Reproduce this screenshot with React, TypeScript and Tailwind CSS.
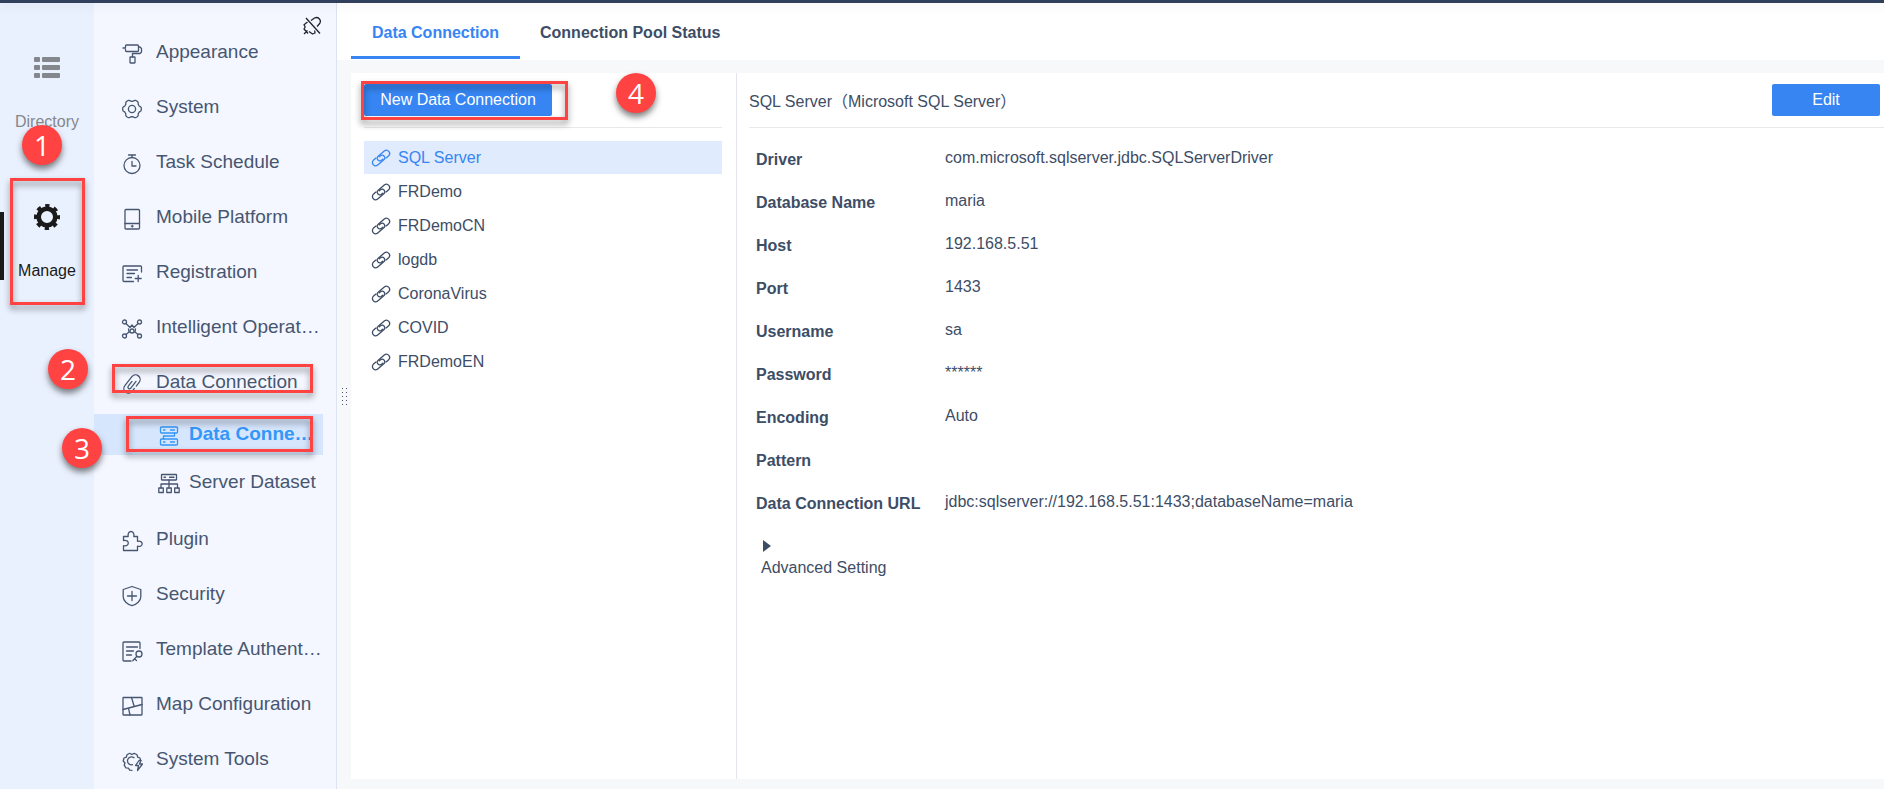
import type { ReactNode } from "react";

type NavItem = { label: string; icon: ReactNode };

// Wavy outline used by the gear shaped icons
function gearPath(cx: number, cy: number, r: number, depth: number, lobes: number) {
  const pts: string[] = [];
  for (let i = 0; i <= 96; i++) {
    const a = (i / 96) * Math.PI * 2;
    const wave = Math.max(-0.8, Math.min(0.5, Math.cos(a * lobes)));
    const d = r + depth * wave;
    pts.push(`${(cx + d * Math.cos(a)).toFixed(2)} ${(cy + d * Math.sin(a)).toFixed(2)}`);
  }
  return `M${pts.join("L")}Z`;
}

function Glyph({ children, className = "size-[22px]" }: { children: ReactNode; className?: string }) {
  return (
    <svg
      viewBox="0 0 22 22"
      fill="none"
      stroke="currentColor"
      strokeWidth={1.3}
      strokeLinecap="round"
      strokeLinejoin="round"
      aria-hidden="true"
      className={`shrink-0 ${className}`}
    >
      {children}
    </svg>
  );
}

const topItems: NavItem[] = [
  {
    label: "Appearance",
    icon: (
      <Glyph>
        <path d="M4.500 4.500V3a1 1 0 0 1 1-1h11a1 1 0 0 1 1 1v4.500a1 1 0 0 1-1 1h-11a1 1 0 0 1-1-1V6.500" />
        <path d="M2 5h2.500M17.500 4h1.500l1.500 1.500v3.500l-1.500 1.500h-7.500V14" />
        <rect x="9" y="14" width="5" height="6" rx="0.500" />
      </Glyph>
    ),
  },
  {
    label: "System",
    icon: (
      <Glyph>
        <path d={gearPath(11, 11, 8.7, 1.2, 6)} />
        <circle cx="11" cy="11" r="3.600" />
      </Glyph>
    ),
  },
  {
    label: "Task Schedule",
    icon: (
      <Glyph>
        <circle cx="11" cy="12.500" r="8" />
        <path d="M7.500 2h7M11 2v2.500M11 8.500v4.500h4" />
      </Glyph>
    ),
  },
  {
    label: "Mobile Platform",
    icon: (
      <Glyph>
        <rect x="4" y="1.500" width="14.500" height="19.500" rx="1" />
        <path d="M4 15.500h14.500M10.400 18.200h1.700M11.250 17.400v1.700" />
      </Glyph>
    ),
  },
  {
    label: "Registration",
    icon: (
      <Glyph>
        <path d="M20.500 9V4a1 1 0 0 0-1-1H3a1 1 0 0 0-1 1v13.500a1 1 0 0 0 1 1h9.500" />
        <path d="M6 7h10.500M6 10.500h7.500M6 14.500h4.500M17.200 12.500v6M14.200 15.500h6" />
      </Glyph>
    ),
  },
  {
    label: "Intelligent Operation",
    icon: (
      <Glyph>
        <circle cx="3.500" cy="4" r="2" />
        <circle cx="18.500" cy="4" r="2" />
        <circle cx="3.500" cy="18" r="2" />
        <circle cx="18.500" cy="18" r="2" />
        <circle cx="11" cy="13" r="2" />
        <path d="M5 5.500l4 4 2-2.500 2 2.500 4-4M5 16.500l3-2.500-.500-3M17 16.500l-3-2.500.500-3M9.500 14.500l-1.500-.500M12.500 14.500l1.500-.500" />
      </Glyph>
    ),
  },
  {
    label: "Data Connection",
    icon: (
      <Glyph>
        <g transform="rotate(38 11 11)">
          <path d="M15.600 10V5.300a4.600 4.600 0 0 0-9.200 0v11.400a4.600 4.600 0 0 0 9.200 0V13" />
          <path d="M12.600 6.500v8.500a1.600 1.600 0 0 1-3.200 0V9" />
        </g>
      </Glyph>
    ),
  },
];

const childItems = [
  {
    label: "Data Connection",
    active: true,
    icon: (
      <Glyph className="size-[22px]">
        <rect x="2.500" y="2" width="17" height="6" rx="1" />
        <rect x="2.500" y="14" width="17" height="6" rx="1" />
        <path d="M5.500 5h1.500M12.500 5h4M5.500 17h1.500M12.500 17h4M16.500 8v3H5.500v3" />
      </Glyph>
    ),
  },
  {
    label: "Server Dataset",
    active: false,
    icon: (
      <Glyph className="size-[22px]">
        <rect x="3.500" y="1.500" width="15" height="5.500" rx="0.500" />
        <path d="M6 4.250h1.500M11.500 4.250h4.500M11 7v8M3 15v-4h16.500v4" />
        <rect x="0.800" y="15" width="4.500" height="4.500" />
        <rect x="8.800" y="15" width="4.500" height="4.500" />
        <rect x="16.700" y="15" width="4.500" height="4.500" />
      </Glyph>
    ),
  },
];

const bottomItems: NavItem[] = [
  {
    label: "Plugin",
    icon: (
      <Glyph>
        <path d="M2.500 20.500v-4.800c3.500.8 4.800-1 4.800-2.700s-1.700-3.200-4.800-2.500V6.500h4.700c-.6-3 .8-5 2.800-5s3.400 2 2.800 5h3.700v4.800c2.700-.6 4.700.7 4.700 2.500s-2 3.200-4.700 2.400v4.300z" />
      </Glyph>
    ),
  },
  {
    label: "Security",
    icon: (
      <Glyph>
        <path d="M11 1.500l8.800 3v7.200c0 4-4 7.600-8.800 9-4.800-1.400-8.800-5-8.800-9V4.500zM11 6.500v9M6.500 11h9" />
      </Glyph>
    ),
  },
  {
    label: "Template Authentication",
    icon: (
      <Glyph>
        <path d="M19 8.500V3a1 1 0 0 0-1-1H3a1 1 0 0 0-1 1v17a1 1 0 0 0 1 1h7" />
        <path d="M5.500 7h11M5.500 11h7M5.500 15h5M15.700 16.500l-4 4.300M13.500 18.700l2 1.800" />
        <circle cx="18" cy="14" r="3" />
      </Glyph>
    ),
  },
  {
    label: "Map Configuration",
    icon: (
      <Glyph>
        <rect x="2" y="2.500" width="19" height="17.500" rx="0.500" />
        <path d="M2 14.500l19-5M10.500 2.500l2.800 9.200M7.500 13.200l1.500 6.800" />
      </Glyph>
    ),
  },
  {
    label: "System Tools",
    icon: (
      <Glyph>
        <path d="M11 20.300l-2.300-.2-1.300-2-2.500-.2-1.700-2.700.8-2.200-1.800-2 .8-3 2.300-.8.7-2.400 2.700-1.500 2.100 1.200 2.400-1.200 2.800 1.500.7 2.400 2.200.8.900 2.600" />
        <path d="M13 7.700a4 4 0 1 0-1.500 7" />
        <path d="M18 10.500l-3.500 5h3l-1 5 5-6.500h-3l1.500-3.500z" />
      </Glyph>
    ),
  },
];

const connections = ["SQL Server", "FRDemo", "FRDemoCN", "logdb", "CoronaVirus", "COVID", "FRDemoEN"];

const details = [
  ["Driver", "com.microsoft.sqlserver.jdbc.SQLServerDriver"],
  ["Database Name", "maria"],
  ["Host", "192.168.5.51"],
  ["Port", "1433"],
  ["Username", "sa"],
  ["Password", "******"],
  ["Encoding", "Auto"],
  ["Pattern", ""],
  ["Data Connection URL", "jdbc:sqlserver://192.168.5.51:1433;databaseName=maria"],
];

function LinkIcon() {
  return (
    <svg
      viewBox="0 0 20 20"
      fill="none"
      stroke="currentColor"
      strokeWidth={1.3}
      strokeLinecap="round"
      aria-hidden="true"
      className="size-5 shrink-0"
    >
      <g transform="rotate(-40 10 10)">
        <path d="M14 13.200h3a3.200 3.200 0 0 0 0-6.400H9a2.600 2.600 0 0 0 0 5.200h1.500" />
        <path d="M6 6.800H3a3.200 3.200 0 0 0 0 6.400h8a2.600 2.600 0 0 0 0-5.200H9.500" />
      </g>
    </svg>
  );
}

function NavRow({ label, icon }: NavItem) {
  return (
    <a href="#" className="flex h-[55px] items-center gap-[13px] pl-[27px] text-[19px]">
      <span className="pt-[2px]">{icon}</span>
      <span className="truncate">{label}</span>
    </a>
  );
}

function Rail() {
  return (
    <nav className="flex w-[94px] shrink-0 flex-col bg-[#eaf1fe] pt-[17px] text-base">
      <a href="#" className="flex h-[149px] flex-col items-center justify-center gap-[29px] text-[#84878c]">
        <svg viewBox="0 0 26 26" fill="currentColor" aria-hidden="true" className="size-[26px]">
          <rect x="0" y="2" width="6" height="5" rx="1" />
          <rect x="8" y="2" width="18" height="5" rx="1" />
          <rect x="0" y="10" width="6" height="5" rx="1" />
          <rect x="8" y="10" width="18" height="5" rx="1" />
          <rect x="0" y="18" width="6" height="5" rx="1" />
          <rect x="8" y="18" width="18" height="5" rx="1" />
        </svg>
        Directory
      </a>
      <a href="#" className="relative flex h-[149px] flex-col items-center justify-center gap-[29px] text-[#1a1a1a]">
        <span className="absolute top-[43px] left-0 h-[68px] w-1 bg-[#1a1a1a]" />
        <svg viewBox="0 0 26 26" fill="none" stroke="currentColor" aria-hidden="true" className="size-[26px]">
          <circle cx="13" cy="13" r="8.300" strokeWidth="4.600" />
          <circle cx="13" cy="13" r="11.500" strokeWidth="3" strokeDasharray="4.400 4.632" strokeDashoffset="2.200" />
        </svg>
        Manage
      </a>
    </nav>
  );
}

function Sidebar() {
  return (
    <aside className="relative w-[243px] shrink-0 border-r border-[#dde3f0] bg-[#f4f7ff] pt-[22px] pr-[13px] text-[#475670]">
      <button type="button" aria-label="Unpin menu" className="absolute top-[13px] right-[14px] text-[#1f2430]">
        <svg viewBox="0 0 20 20" fill="none" stroke="currentColor" strokeWidth={1.3} strokeLinejoin="round" aria-hidden="true" className="size-5">
          <path d="M4 2l14 15.500" />
          <path d="M9 4.500l3.500-2.500c1.700-.8 3.500-.6 4.700.7s1.500 3.200.5 4.800L15 10.500" />
          <path d="M5.500 6L2 8.700l1.200 2.300L2 13l4 4.500M2 18l3.500-3.500M7 15.500l3.500 2.500 2.500-1-.3-2.500" />
        </svg>
      </button>
      {topItems.map((item) => (
        <NavRow key={item.label} {...item} />
      ))}
      <div className="mt-1 mb-[9px] flex flex-col gap-[7px]">
        {childItems.map((item) => (
          <a
            key={item.label}
            href="#"
            className={`flex h-[41px] items-center pl-16 text-[19px] ${
              item.active ? "bg-[#d6e6fd] font-bold text-[#3396f8]" : ""
            }`}
          >
            <span className="flex w-[31px] shrink-0 pt-[3px]">{item.icon}</span>
            <span className="truncate pb-px">{item.label}</span>
          </a>
        ))}
      </div>
      {bottomItems.map((item) => (
        <NavRow key={item.label} {...item} />
      ))}
    </aside>
  );
}

function Details() {
  return (
    <section className="min-w-0 grow pl-3">
      <div className="flex h-[55px] items-center justify-between border-b border-[#e6e8eb] pr-1">
        <h1 className="pt-1">SQL Server（Microsoft SQL Server）</h1>
        <button type="button" className="h-8 w-[108px] rounded-[2px] bg-[#3685f2] text-white">
          Edit
        </button>
      </div>
      <dl className="mt-[9px] pl-[7px]">
        {details.map(([label, value]) => (
          <div key={label} className="flex h-[43px] items-center">
            <dt className="w-[189px] shrink-0 pt-[2px] font-bold">{label}</dt>
            <dd className="pb-[2px]">{value}</dd>
          </div>
        ))}
      </dl>
      <button type="button" className="mt-4 ml-3 flex flex-col items-start gap-1">
        <svg viewBox="0 0 8 12" fill="currentColor" aria-hidden="true" className="ml-[2px] h-3 w-2">
          <path d="M0 0l8 6-8 6z" />
        </svg>
        Advanced Setting
      </button>
    </section>
  );
}

// Numbered step markers and frames laid over the page
function Callouts() {
  const badge =
    "absolute flex size-10 items-center justify-center rounded-full bg-[#ff4343] font-['Open_Sans',sans-serif] text-[28px] leading-none text-white shadow-[0_4px_6px_rgba(0,0,0,0.5)]";
  const frame = "absolute border-3 border-[#ff4343] drop-shadow-[0_4px_3px_rgba(0,0,0,0.45)]";
  return (
    <div className="pointer-events-none absolute inset-0 z-20">
      <div className={`${frame} top-[178px] left-[10px] h-[127px] w-[75px]`} />
      <div className={`${frame} top-[364px] left-[112px] h-[29px] w-[201px]`} />
      <div className={`${frame} top-[416px] left-[126px] h-[36px] w-[187px]`} />
      <div className={`${frame} top-[81px] left-[361px] h-[39px] w-[207px]`} />
      <span className={`${badge} top-[125px] left-[22px]`}>1</span>
      <span className={`${badge} top-[349px] left-[48px]`}>2</span>
      <span className={`${badge} top-[428px] left-[62px]`}>3</span>
      <span className={`${badge} top-[73px] left-[616px]`}>4</span>
    </div>
  );
}

export default function App() {
  return (
    <div className="relative flex min-h-screen flex-col overflow-hidden bg-[#f6f8fa] font-['Liberation_Sans',Arial,'Noto_Sans_CJK_SC',sans-serif] text-base text-[#3d4d66]">
      <header className="relative z-10 h-[3px] shrink-0 bg-[#2f3f5c] shadow-[0_2px_12px_rgba(0,0,0,0.1)]" />
      <div className="flex grow">
        <Rail />
        <Sidebar />
        <main className="relative flex min-w-0 grow flex-col">
          <div role="tablist" className="flex h-[57px] shrink-0 items-start bg-white pl-[14px] font-bold">
            <button
              type="button"
              role="tab"
              aria-selected="true"
              className="h-14 w-[169px] border-b-3 border-[#3685f2] pt-[6px] text-[#3685f2]"
            >
              Data Connection
            </button>
            <button type="button" role="tab" aria-selected="false" className="h-14 border-b-3 border-transparent px-5 pt-[6px]">
              Connection Pool Status
            </button>
          </div>
          <svg viewBox="0 0 8 18" fill="#4a5670" aria-hidden="true" className="absolute top-[385px] left-1 h-[18px] w-2">
            {[0, 4, 8, 12, 16].map((y) => (
              <g key={y}>
                <rect x="1" y={y} width="1" height="1" />
                <rect x="5" y={y} width="1" height="1" />
              </g>
            ))}
          </svg>
          <div className="mt-[13px] mb-[10px] ml-[14px] flex grow bg-white">
            <section className="w-[386px] shrink-0 border-r border-[#e2e5ee] pr-[14px] pl-[13px]">
              <div className="flex h-[55px] items-center border-b border-[#e6e8eb]">
                <button type="button" className="h-8 w-[188px] rounded-[2px] bg-[#3685f2] text-white">
                  New Data Connection
                </button>
              </div>
              <ul className="mt-[13px] flex flex-col gap-px">
                {connections.map((name, i) => (
                  <li key={name}>
                    <a
                      href="#"
                      className={`flex h-[33px] items-center gap-[7px] pl-[7px] ${i === 0 ? "bg-[#e0ebfd] text-[#3685f2]" : ""}`}
                    >
                      <LinkIcon />
                      {name}
                    </a>
                  </li>
                ))}
              </ul>
            </section>
            <Details />
          </div>
        </main>
      </div>
      <Callouts />
    </div>
  );
}
